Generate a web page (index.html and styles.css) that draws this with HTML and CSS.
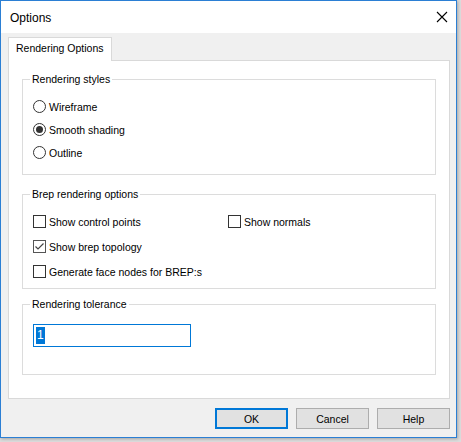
FILE: index.html
```html
<!DOCTYPE html>
<html>
<head>
<meta charset="utf-8">
<link rel="stylesheet" href="styles.css">
</head>
<body>
<div class="window">
  <div class="titlebar">
    <span class="title">Options</span>
    <svg class="close" width="12" height="12" viewBox="0 0 12 12"><path d="M1 1 L11 11 M11 1 L1 11" stroke="#000" stroke-width="1.1" fill="none"/></svg>
  </div>
  <div class="content">
    <div class="tabs">
      <div class="tab">Rendering Options</div>
    </div>
    <div class="panel">
      <fieldset class="group g1">
        <legend>Rendering styles</legend>
        <div class="row r23"><span class="radio"></span>Wireframe</div>
        <div class="row r23"><span class="radio on"></span>Smooth shading</div>
        <div class="row r23"><span class="radio"></span>Outline</div>
      </fieldset>
      <fieldset class="group g2">
        <legend>Brep rendering options</legend>
        <div class="row r25">
          <div class="col1"><span class="check"></span>Show control points</div>
          <div><span class="check"></span>Show normals</div>
        </div>
        <div class="row r25"><span class="check on"><svg width="11" height="11" viewBox="0 0 11 11"><path d="M1.5 5.5 L4 8 L9.5 2.5" stroke="#444" stroke-width="1.2" fill="none"/></svg></span>Show brep topology</div>
        <div class="row r25"><span class="check"></span>Generate face nodes for BREP:s</div>
      </fieldset>
      <fieldset class="group g3">
        <legend>Rendering tolerance</legend>
        <div class="textbox"><span class="sel">1</span></div>
      </fieldset>
    </div>
    <div class="buttons">
      <div class="btn default">OK</div>
      <div class="btn">Cancel</div>
      <div class="btn">Help</div>
    </div>
  </div>
</div>
</body>
</html>
```
FILE: styles.css
```css
html, body {
  margin: 0;
  padding: 0;
}
body {
  background: #dcdcdc;
  width: 461px;
  height: 442px;
  font-family: "Liberation Sans", Arial, sans-serif;
  font-size: 10.5px;
  color: #000;
}
.window {
  box-sizing: border-box;
  width: 457px;
  height: 438px;
  border: 1px solid #2b7fd4;
  background: #f0f0f0;
  display: flex;
  flex-direction: column;
  box-shadow: 1px 1px 3px rgba(0,0,0,0.25);
}
.titlebar {
  height: 32px;
  background: #fff;
  display: flex;
  align-items: center;
  justify-content: space-between;
  padding: 0 8px 0 9px;
}
.title {
  font-size: 12px;
  line-height: 14px;
  margin-top: 1px;
}
.content {
  padding: 4px 0 0 7px;
}
.tabs {
  display: flex;
  height: 23px;
}
.tab {
  box-sizing: border-box;
  width: 104px;
  height: 24px;
  border: 1px solid #d9d9d9;
  border-bottom: none;
  background: #fff;
  padding: 3px 0 0 7px;
  line-height: 14px;
  position: relative;
  z-index: 1;
}
.panel {
  box-sizing: border-box;
  width: 442px;
  height: 339px;
  border: 1px solid #d9d9d9;
  background: #fff;
  padding: 12px 12px 0 13px;
}
.group {
  margin: 0;
  border: 1px solid #dcdcdc;
  width: 414px;
  box-sizing: border-box;
  padding: 9px 10px 10px 10px;
}
.group legend {
  padding: 0 2px;
  margin-left: -3px;
  line-height: 13px;
  height: 13px;
}
.g2 {
  margin-top: 13px;
  padding-top: 8px;
  padding-bottom: 4px;
}
.g3 {
  margin-top: 9px;
  padding-top: 13px;
  padding-bottom: 27px;
}
.row {
  display: flex;
  align-items: center;
}
.r23 { height: 23px; }
.r25 { height: 25px; }
.col1 {
  display: flex;
  align-items: center;
  width: 195px;
}
.row > div:not(.col1) {
  display: flex;
  align-items: center;
}
.radio {
  box-sizing: border-box;
  width: 13px;
  height: 13px;
  border: 1px solid #333;
  border-radius: 50%;
  margin-right: 3px;
  display: flex;
  align-items: center;
  justify-content: center;
  background: #fff;
}
.radio.on::after {
  content: "";
  width: 7px;
  height: 7px;
  border-radius: 50%;
  background: #333;
}
.check {
  box-sizing: border-box;
  width: 13px;
  height: 13px;
  border: 1px solid #333;
  margin-right: 3px;
  display: flex;
  align-items: center;
  justify-content: center;
  background: #fff;
}
.check.on {
  border-color: #555;
}
.textbox {
  box-sizing: border-box;
  width: 158px;
  height: 23px;
  border: 1px solid #0078d7;
  padding: 2px 0 0 2px;
}
.sel {
  display: inline-block;
  background: #0078d7;
  color: #fff;
  font-size: 12px;
  line-height: 17px;
  height: 17px;
  padding: 0 1px;
}
.buttons {
  display: flex;
  gap: 8px;
  padding-left: 207px;
  margin-top: 9px;
}
.btn {
  box-sizing: border-box;
  width: 73px;
  height: 21px;
  border: 1px solid #adadad;
  background: #e1e1e1;
  display: flex;
  align-items: center;
  justify-content: center;
  font-size: 10.5px;
}
.btn.default {
  border: 2px solid #0078d7;
}
```
